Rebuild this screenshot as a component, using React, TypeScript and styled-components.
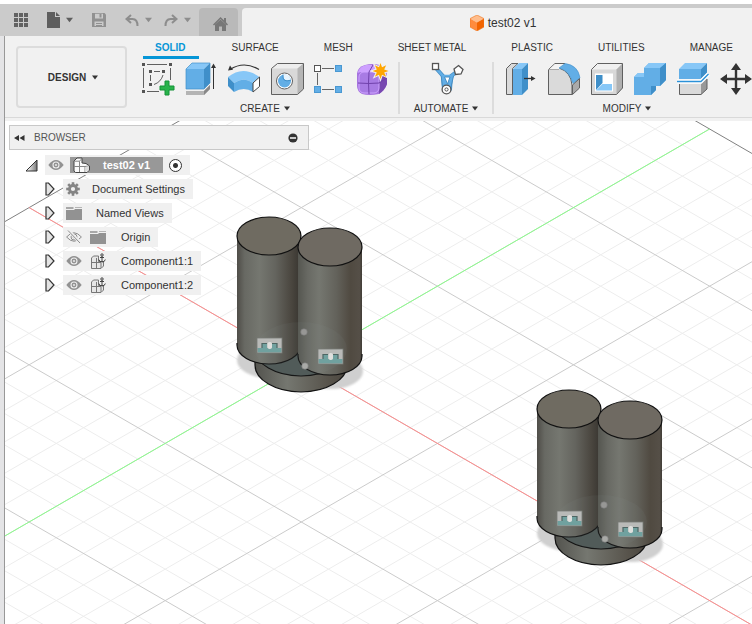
import React from "react";
import styled, { createGlobalStyle, css } from "styled-components";

const GlobalStyle = createGlobalStyle`
  * { box-sizing: border-box; }
  html, body { margin: 0; padding: 0; background: #fff; }
  body { font-family: "Liberation Sans", Arial, sans-serif; color: #333; }
  button { font: inherit; color: inherit; background: none; border: 0; padding: 0; margin: 0; cursor: pointer; }
  ul { list-style: none; margin: 0; padding: 0; }
  svg { display: block; flex: none; }
`;

/* ---------- frame ---------- */

const Shell = styled.div`
  display: flex;
  flex-direction: column;
  min-height: 100vh;
  padding-top: 4px;
  overflow: hidden;
`;

const TitleBar = styled.header`
  display: flex;
  align-items: stretch;
  height: 32px;
  background: #cbcbcb;
`;

const QuickAccess = styled.div`
  display: flex;
  align-items: center;
  width: 199px;
  padding-left: 13px;
`;

const QuickButton = styled.button<{ $gap?: number }>`
  display: flex;
  align-items: center;
  gap: 6px;
  margin-right: ${(p) => p.$gap ?? 0}px;
`;

const HomeTab = styled.button`
  display: flex;
  align-items: center;
  justify-content: center;
  width: 39px;
  margin: 4px 4px 0 0;
  padding: 3px 0 0 3px;
  border-radius: 4px 4px 0 0;
  background: #b9b9b9;
`;

const DocumentTab = styled.h1`
  display: flex;
  flex: 1;
  align-items: center;
  justify-content: center;
  gap: 4px;
  margin: 4px 0 0;
  padding: 2px 0 0 12px;
  border-radius: 4px 0 0 0;
  background: #f1f1f1;
  font-size: 12px;
  font-weight: 400;
  line-height: 26px;
`;

const Workspace = styled.div`
  display: flex;
  flex: 1;
  flex-direction: column;
  min-width: 0;
  border-left: 4px solid #e4e4e6;
`;

/* ---------- ribbon ---------- */

const Ribbon = styled.section`
  border-left: 1px solid #989898;
  background: #f1f1f1;
  padding-bottom: 3px;
`;

const RibbonBody = styled.div`
  display: flex;
  overflow: hidden;
  border-bottom: 1px solid #d9d9d9;
`;

const WorkspaceButton = styled.button`
  display: flex;
  flex: none;
  align-items: center;
  justify-content: center;
  gap: 6px;
  width: 111px;
  height: 62px;
  margin: 10px 9px 9px 11px;
  padding-left: 3px;
  border: 2px solid #dcdcdc;
  border-radius: 4px;
  font-size: 10px;
  font-weight: 700;
`;

const Tools = styled.div`
  flex: 1;
  min-width: 0;
`;

const TabList = styled.div`
  display: flex;
  gap: 21px;
  padding-left: 7px;
`;

const Tab = styled.button<{ $active?: boolean }>`
  flex: none;
  height: 23px;
  padding: 4px 12px 0;
  border-bottom: 3px solid transparent;
  font-size: 10px;
  line-height: 16px;
  white-space: nowrap;
  ${(p) =>
    p.$active &&
    css`
      padding-right: 13px;
      border-bottom-color: #0696d7;
      color: #0696d7;
      font-weight: 700;
    `}
`;

const Groups = styled.div`
  display: flex;
`;

const Group = styled.div<{ $wide?: boolean }>`
  display: flex;
  flex: none;
  flex-direction: column;
  align-items: center;
  width: ${(p) => (p.$wide ? "258px" : "84px")};
`;

const IconRow = styled.div`
  display: flex;
`;

const GroupLabel = styled.button`
  display: flex;
  align-items: center;
  gap: 4px;
  height: 19px;
  padding-top: 1px;
  font-size: 10px;
  white-space: nowrap;
`;

const Divider = styled.div`
  flex: none;
  width: 2px;
  margin: 3px 4px;
  background: #dcdcdc;
`;

/* ---------- canvas ---------- */

const Canvas = styled.main`
  position: relative;
  flex: 1;
  min-height: 503px;
  overflow: hidden;
  border-left: 1px solid #989898;
  background: #fff;
`;

const Scene = styled.svg`
  position: absolute;
  inset: 0;
  width: 100%;
  height: 100%;
`;

const BrowserPanel = styled.aside`
  position: relative;
  width: 300px;
  margin: 4px;
`;

const PanelHeader = styled.div`
  display: flex;
  align-items: center;
  gap: 9px;
  height: 25px;
  padding: 0 10px 0 4px;
  border: 1px solid #c8c8c8;
  background: #f0f0f0;
`;

const PanelTitle = styled.h2`
  flex: 1;
  margin: 0;
  color: #555;
  font-size: 10px;
  font-weight: 400;
`;

const Tree = styled.ul`
  padding-top: 3px;
`;

const TreeRow = styled.li<{ $root?: boolean }>`
  display: flex;
  align-items: center;
  gap: ${(p) => (p.$root ? 7 : 8)}px;
  height: 24px;
  padding-left: ${(p) => (p.$root ? 16 : 36)}px;
`;

const RowBody = styled.div<{ $root?: boolean }>`
  display: flex;
  align-items: center;
  gap: ${(p) => (p.$root ? 6 : 8)}px;
  height: 20px;
  padding: 0 8px 0 3px;
  background: #f0f0f0;
  font-size: 11px;
`;

const RowLabel = styled.span<{ $gap: number }>`
  margin-left: ${(p) => p.$gap}px;
  white-space: nowrap;
`;

const ActiveName = styled.span`
  display: flex;
  align-items: center;
  gap: 12px;
  height: 16px;
  padding: 0 13px 0 3px;
  background: #989898;
  color: #fff;
  font-weight: 700;
  white-space: nowrap;
`;

const ActiveRadio = styled.input`
  width: 13px;
  height: 13px;
  margin: 0;
  appearance: none;
  border: 1px solid #333;
  border-radius: 50%;
  background: radial-gradient(circle, #333 2px, #fff 3px);
`;

/* ---------- small glyphs ---------- */

const Caret = ({ color = "#333", size = 6 }: { color?: string; size?: number }) => (
  <svg width={size} height={size - 1} viewBox="0 0 6 5" aria-hidden>
    <path d="M0 0.5H6L3 4.5Z" fill={color} />
  </svg>
);

const GridIcon = () => (
  <svg width="16" height="16" viewBox="0 0 16 16" fill="#626262">
    {[0, 5, 10].map((y) =>
      [0, 5, 10].map((x) => <rect key={`${x}-${y}`} x={x + 1} y={y + 1} width="4" height="4" />)
    )}
  </svg>
);

const FileIcon = () => (
  <svg width="13" height="16" viewBox="0 0 13 16" fill="#5e5e5e">
    <path d="M0 0H8V5H13V16H0Z" />
    <path d="M9 0L13 4H9Z" />
  </svg>
);

const SaveIcon = () => (
  <svg width="14" height="14" viewBox="0 0 14 14">
    <path d="M0 0H12.5L14 1.5V14H0Z" fill="#919191" />
    <path d="M3 0.8H11V5.5H3ZM2.5 8.5H11.5V13H2.5Z" fill="#cbcbcb" />
    <path d="M7.5 1H9.5V4.5H7.5ZM4 10H10V11H4ZM4 12H10V13H4Z" fill="#919191" />
  </svg>
);

const UndoIcon = ({ flip }: { flip?: boolean }) => (
  <svg width="14" height="13" viewBox="0 0 14 13" fill="none" stroke="#8d8d8d" strokeWidth="2">
    <g transform={flip ? "translate(14 0) scale(-1 1)" : undefined}>
      <path d="M6 1L1.5 5L6 9" />
      <path d="M2 5H7.5Q12.5 5 12.5 12" />
    </g>
  </svg>
);

const HomeIcon = () => (
  <svg width="15" height="14" viewBox="0 0 15 14" fill="#777">
    <path d="M7.5 0L11 3.3V1H13V5.2L15 7.4L14 8.4L7.5 2L1 8.4L0 7.4Z" />
    <path d="M2 7.6L7.5 2.4L13 7.6V14H9V9.5H6V14H2Z" />
  </svg>
);

const CubeIcon = () => (
  <svg width="14" height="16" viewBox="0 0 14 16">
    <path d="M7 0L14 3.6L7 7.5L0 3.6Z" fill="#ffbd8c" />
    <path d="M0 3.6L7 7.5V16L0 12Z" fill="#ff8b3d" />
    <path d="M14 3.6L7 7.5V16L14 12Z" fill="#f26400" />
    <path d="M7 0L14 3.6V12L7 16L0 12V3.6Z" fill="none" stroke="#ef761f" strokeWidth=".6" />
  </svg>
);

const EyeIcon = ({ hidden }: { hidden?: boolean }) => (
  <svg width="16" height="14" viewBox="0 0 16 14">
    {hidden ? (
      <g fill="none" stroke="#8e8e8e">
        <path d="M.6 7Q8-1.5 15.4 7Q8 15.5.6 7Z" />
        <circle cx="8" cy="7" r="3" />
        <circle cx="8" cy="7" r="1" fill="#8e8e8e" />
        <path d="M2.5.5L14.5 13" stroke="#f0f0f0" strokeWidth="3" />
        <path d="M2 .5L14 13" />
      </g>
    ) : (
      <>
        <path d="M.3 7Q8-3 15.7 7Q8 17 .3 7Z" fill="#929292" />
        <circle cx="8" cy="7" r="3" fill="#929292" stroke="#efefef" strokeWidth="1.1" />
        <circle cx="8" cy="7" r="1.1" fill="#e5e5e5" />
      </>
    )}
  </svg>
);

const GearIcon = () => (
  <svg width="14" height="14" viewBox="-7 -7 14 14">
    {[0, 45, 90, 135].map((a) => (
      <rect key={a} x="-1.3" y="-6.8" width="2.6" height="13.6" fill="#858585" transform={`rotate(${a})`} />
    ))}
    <circle r="3.5" fill="#f0f0f0" stroke="#858585" strokeWidth="2.8" />
  </svg>
);

const FolderIcon = () => (
  <svg width="16" height="14" viewBox="0 0 16 14">
    <path d="M0 4H8L9 3H16V14H0Z" fill="#929292" />
    <path d="M0 1H7.5V3H0Z" fill="#a8a8a8" />
    <path d="M9 1.5H16" stroke="#b5b5b5" />
  </svg>
);

const ComponentIcon = () => (
  <svg width="18" height="16" viewBox="0 0 18 16" stroke="#444" strokeLinejoin="round">
    <path d="M1 4L4 1H9V6L13 6.5L16.5 9V13L14 15.5H2.5L1 14Z" fill="#fafafa" />
    <path d="M1.3 4.2H6.5L9 1.5M6.5 4.2V9.5H12L16 9M6.5 9.5V15M12 9.5V15M1.2 9.5H6.5" stroke="#858585" fill="none" />
    <path d="M12.2 10L16 9.3V13L12.2 15Z" fill="#dcdcdc" stroke="none" />
  </svg>
);

const AnchoredIcon = () => (
  <svg width="16" height="17" viewBox="0 0 16 17" fill="none" strokeLinejoin="round">
    <path d="M1.5 5L3.5 3H8.5V8.5H13.5V13L11 15.5H1.5Z" fill="#e6e6e6" stroke="#777" />
    <path d="M1.5 9.5H11M6.5 5V15M11 10V15" stroke="#777" />
    <circle cx="12" cy="2" r="1.2" stroke="#444" />
    <path d="M12 3V9M10 4.5H14M8.8 6.5Q9.5 9 12 9Q14.8 9 15.3 6.5" stroke="#444" />
  </svg>
);

const CollapsedIcon = () => (
  <svg width="10" height="14" viewBox="0 0 10 14">
    <path d="M1 1H3.5L9 7L3.5 13H1Z" fill="#e4e4e4" stroke="#333" strokeWidth="1.2" />
  </svg>
);

const ExpandedIcon = () => (
  <svg width="13" height="13" viewBox="0 0 13 13">
    <defs>
      <linearGradient id="expander">
        <stop offset="0.2" stopColor="#eee" />
        <stop offset="1" stopColor="#777" />
      </linearGradient>
    </defs>
    <path d="M1 12H12V1Z" fill="url(#expander)" stroke="#333" />
  </svg>
);

/* ---------- ribbon icons, drawn in 43 x 39 cells ---------- */

const FRONT = "#62aee6";
const TOP = "#87c7f7";
const SIDE = "#3f8fc9";
const EDGE = "#606060";

const SketchIcon = () => (
  <>
    <g fill="none" stroke={EDGE} strokeWidth="1">
      <path d="M11 6.5H31M34.5 10V22M7.5 10V30M11 33.5H23M18 13.5H24M14.5 17V23" />
      <path d="M27 17Q25 24 18 26.5" />
    </g>
    {[[7, 6], [34, 6], [7, 33], [14, 13], [27, 13], [14, 26]].map(([x, y]) => (
      <rect key={`${x}-${y}`} x={x - 1} y={y - 1} width="3" height="3" fill="#555" />
    ))}
    <path d="M29 23H33V28H38V32H33V37H29V32H24V28H29Z" fill="#28b34b" stroke="#159238" />
  </>
);

const ExtrudeIcon = () => (
  <>
    <path d="M7 33H25L31 27V31L25 37H7Z" fill="#b4b4b4" />
    <path d="M25 33L31 27V31L25 37Z" fill="#888" />
    <path d="M7 11H25V31H7Z" fill={FRONT} />
    <path d="M7 11L13 5H31L25 11Z" fill={TOP} />
    <path d="M25 11L31 5V25L25 31Z" fill={SIDE} />
    <path d="M7 11L13 5H31V25L25 31H7Z" fill="none" stroke={SIDE} strokeWidth=".7" />
    <path d="M34.5 31V8" stroke="#333" />
    <path d="M34.5 5.5L32 10H37Z" fill="#333" />
  </>
);

const RevolveIcon = () => (
  <>
    <path d="M8 11.5Q22 2.5 37 11.5" fill="none" stroke="#333" strokeWidth="1.2" />
    <path d="M6 12.5L8 7.5L11 11.8Z" fill="#333" />
    <path d="M6 19Q21 7 37.5 19L31 25Q22 18 12 25Z" fill={TOP} />
    <path d="M12 25Q22 18 31 25V34Q22 28 12 34Z" fill={FRONT} />
    <path d="M6 19L12 25V34L6 28Z" fill={SIDE} />
    <path d="M31 25L37.5 19V28.5L31 34Z" fill="#fff" stroke="#444" />
  </>
);

const HoleIcon = () => (
  <>
    <path d="M6.5 10.5L12.5 5.5H38.5V31L32.5 36.5H6.5Z" fill="#d9d9d9" />
    <path d="M6.5 10.5L12.5 5.5H38.5L32.5 10.5Z" fill="#eee" />
    <path d="M32.5 10.5L38.5 5.5V31L32.5 36.5Z" fill="#b5b5b5" />
    <path d="M6.5 10.5L12.5 5.5H38.5V31L32.5 36.5H6.5Z" fill="none" stroke={EDGE} />
    <circle cx="19.5" cy="23" r="8" fill="#fff" stroke={EDGE} />
    <circle cx="19.5" cy="23" r="6.5" fill={FRONT} />
    <path d="M18 16.6Q18 24.5 25.8 22Q24 15 18 16.6Z" fill="#e6f3fd" />
    <path d="M18 16.6Q17 25 25.8 22.2" fill="none" stroke={SIDE} />
  </>
);

const PatternIcon = () => (
  <>
    <path d="M14 10.5H26M9.5 15V27M14 31.5H26" stroke="#666" />
    <rect x="6.5" y="7.5" width="6" height="6" fill="#fff" stroke="#555" />
    {[[27.5, 7.5], [6.5, 28.5], [27.5, 28.5]].map(([x, y]) => (
      <rect key={`${x}-${y}`} x={x} y={y} width="6" height="6" fill={FRONT} stroke="#4a98d2" />
    ))}
  </>
);

const STAR = Array.from({ length: 16 }, (_, i) => {
  const r = i % 2 ? 4 : 8;
  const a = (i * Math.PI) / 8;
  return `${29.5 + r * Math.sin(a)},${13 - r * Math.cos(a)}`;
}).join(" ");

const FormIcon = () => (
  <>
    <path d="M6 15Q7 9 14 7Q21 5 29 7Q36 9 36 19V26Q34 32 28 36Q18 38 11 36Q6 33 6 28Z" fill="#a674df" />
    <path d="M6.5 15Q9 8 15 7H26L30 12Q28 14 24 14H12Q8 14 6.5 15Z" fill="#cda0ff" />
    <path d="M28 15L36 17V26Q34 32 28 36Z" fill="#7849b0" />
    <rect x="8" y="14" width="20" height="21" rx="5" fill="#a87be4" stroke="#cda4ff" />
    <path d="M7 25Q18 26 28 25L36 20M18 14Q17 25 18 36M18 14L22 7" fill="none" stroke="#7041ab" />
    <polygon points={STAR} fill="#ffa600" stroke="#f1f1f1" strokeWidth="2" />
    <polygon points={STAR} fill="#ffa600" />
  </>
);

const AutomateIcon = () => (
  <>
    <path d="M10 9L18 18L19 31L25 31L26 18L34 12" fill="none" stroke="#478fc5" strokeWidth="4" strokeLinejoin="round" />
    <path d="M16 16Q22 20 29 16L25 33H18Z" fill={FRONT} stroke="#478fc5" />
    <path d="M10 9L18 18L26 18L34 12" fill="none" stroke={FRONT} strokeWidth="2.4" />
    <path d="M19.5 19H25L22.5 26Z" fill="#fff" stroke="#478fc5" />
    <rect x="7.5" y="5.5" width="6" height="6" fill="#fff" stroke="#555" strokeWidth="1.3" />
    <path d="M33.5 7.5L38 11.5L36 16L30.5 16.5L29 11Z" fill="#fff" stroke="#555" strokeWidth="1.3" />
    <circle cx="21.5" cy="31.5" r="4.4" fill="#fff" stroke="#555" strokeWidth="1.3" />
    <circle cx="21.5" cy="31.5" r="1.6" fill="none" stroke="#555" />
  </>
);

const PressPullIcon = () => (
  <>
    <path d="M8.5 10.5L13.5 5.5H20L14.5 10.5V36.5H8.5Z" fill="#dadada" stroke={EDGE} />
    <path d="M15 11H24V37H15Z" fill={FRONT} />
    <path d="M15 11L21 5H30L24 11Z" fill={TOP} />
    <path d="M24 11L30 5V31L24 37Z" fill={SIDE} />
    <path d="M26 20.5H35" stroke="#333" strokeWidth="1.3" />
    <path d="M37.5 20.5L33 18V23Z" fill="#333" />
  </>
);

const FilletIcon = () => (
  <>
    <path d="M7.5 11.5L14 5.5H24L18 10Q30 14 31 27V36.5H7.5Z" fill="#dadada" stroke={EDGE} />
    <path d="M8 11.5L14 6H24L18 11Z" fill="#f4f4f4" />
    <path d="M7.5 11.5H18" stroke="#aaa" />
    <path d="M18 10L24 5.5Q37 7 39 20L32 25.5Q28 12 18 10Z" fill={FRONT} stroke={SIDE} strokeWidth=".6" />
    <path d="M31.5 27L38.5 20.5V30L31.5 36.5Z" fill="#aaa" stroke={EDGE} />
  </>
);

const ShellIcon = () => (
  <>
    <path d="M7.5 11.5L13.5 5.5H38.5V30L32.5 36.5H7.5Z" fill="#d8d8d8" />
    <path d="M7.5 11.5L13.5 5.5H38.5L32.5 11.5Z" fill="#f0f0f0" />
    <path d="M32.5 11.5L38.5 5.5V30L32.5 36.5Z" fill="#b0b0b0" />
    <path d="M7.5 11.5L13.5 5.5H38.5V30L32.5 36.5H7.5Z" fill="none" stroke={EDGE} />
    <rect x="11" y="15.5" width="18" height="18" fill="#fff" />
    <path d="M12 17H18.5V25L12 32Z" fill={SIDE} />
    <path d="M18.5 26H28V32.5H12Z" fill={TOP} />
  </>
);

const CombineIcon = () => (
  <>
    <path d="M7 19L11 15H17V10L22 5H39V22L33 28H29V32L24 37H7Z" fill={FRONT} />
    <path d="M7 19L11 15H17V19ZM17 10L22 5H39L33 10Z" fill={TOP} />
    <path d="M33 10L39 5V22L33 28ZM24 28H29V32L24 37Z" fill={SIDE} />
  </>
);

const SplitIcon = () => (
  <>
    <path d="M9.5 26H31L37 20V31L31 36.5H9.5Z" fill="#dadada" />
    <path d="M31 26L37 20V31L31 36.5Z" fill="#999" />
    <path d="M9.5 26V36.5H31L37 31V21" fill="none" stroke={EDGE} />
    <path d="M9 11H31V21H9Z" fill={FRONT} />
    <path d="M9 11L15 5H37L31 11Z" fill={TOP} />
    <path d="M31 11L37 5V15L31 21Z" fill={SIDE} />
    <path d="M7 23.5H31L38.5 16" fill="none" stroke="#fff" strokeWidth="4" />
    <path d="M7 23.5H31L38.5 16" fill="none" stroke="#2a91d8" strokeWidth="1.3" />
  </>
);

const MoveIcon = () => (
  <>
    <path d="M23 10V32M12 21H34" stroke="#333" strokeWidth="2.4" />
    <path d="M23 5L28 12H18ZM23 37L28 30H18ZM7 21L14 16V26ZM39 21L32 16V26Z" fill="#333" />
  </>
);

type Tool = { name: string; Icon: React.FC };

const ToolButton = ({ name, Icon }: Tool) => (
  <button aria-label={name}>
    <svg width="43" height="39" viewBox="0 1 43 39" aria-hidden>
      <Icon />
    </svg>
  </button>
);

const GROUPS: { label: string; wide: boolean; tools: Tool[] }[] = [
  {
    label: "CREATE",
    wide: true,
    tools: [
      { name: "Create Sketch", Icon: SketchIcon },
      { name: "Extrude", Icon: ExtrudeIcon },
      { name: "Revolve", Icon: RevolveIcon },
      { name: "Hole", Icon: HoleIcon },
      { name: "Rectangular Pattern", Icon: PatternIcon },
      { name: "Create Form", Icon: FormIcon },
    ],
  },
  { label: "AUTOMATE", wide: false, tools: [{ name: "Automated Modeling", Icon: AutomateIcon }] },
  {
    label: "MODIFY",
    wide: true,
    tools: [
      { name: "Press Pull", Icon: PressPullIcon },
      { name: "Fillet", Icon: FilletIcon },
      { name: "Shell", Icon: ShellIcon },
      { name: "Combine", Icon: CombineIcon },
      { name: "Split Body", Icon: SplitIcon },
      { name: "Move/Copy", Icon: MoveIcon },
    ],
  },
];

const TABS = ["SOLID", "SURFACE", "MESH", "SHEET METAL", "PLASTIC", "UTILITIES", "MANAGE"];

/* ---------- 3D scene ---------- */

const CX = 296.3;
const CY = 243.8;
const STEP_X = 136.1;
const STEP_Y = 78.6;

/* u runs along the red axis, v along the green one */
const project = (u: number, v: number) => [CX + (u + v) * STEP_X, CY + (u - v) * STEP_Y];

const segment = (u1: number, v1: number, u2: number, v2: number) => {
  const [x1, y1] = project(u1, v1);
  const [x2, y2] = project(u2, v2);
  return `M${x1} ${y1}L${x2} ${y2}`;
};

const U_MIN = -2;
const V_MAX = 3;
const FAR = 8;

const gridPath = (major: boolean) => {
  const parts: string[] = [];
  for (let i = U_MIN * 5 + 1; i < FAR * 5; i++)
    if ((i % 5 === 0) === major) parts.push(segment(i / 5, -FAR, i / 5, V_MAX));
  for (let i = -FAR * 5; i < V_MAX * 5; i++)
    if ((i % 5 === 0) === major) parts.push(segment(U_MIN, i / 5, FAR, i / 5));
  return parts.join("");
};

const Joint = ({ x, y }: { x: number; y: number }) => (
  <g transform={`translate(${x} ${y})`}>
    <rect width="25" height="15" fill="#b9bab8" />
    <path d="M.5 10H5V5.5H10V10H15V5.5H20V10H24.5V14.5H.5Z" fill="#70a19f" />
    <path d="M5 10V5.5H10M20 10V5.5H15" fill="none" stroke="#4e6664" />
    <rect width="25" height="15" fill="none" stroke="#777a76" strokeWidth=".8" />
    <rect x="10.5" y="4" width="4.5" height="7" rx="2" fill="#dedfdd" />
  </g>
);

const Assembly = ({ x, y }: { x: number; y: number }) => (
  <g transform={`translate(${x} ${y})`} strokeWidth="1.2">
    <g fill="#cfcfcf" filter="url(#soft)">
      <ellipse cx="-32" cy="-5" rx="32" ry="18" />
      <ellipse cx="30" cy="6" rx="32" ry="18" />
    </g>
    <path d="M-46-16V0A46 27 0 0 0 46 0V-16Z" fill="url(#base)" stroke="#111" />
    <ellipse cy="-16" rx="46" ry="27" fill="#4c5654" stroke="#111" />
    <path d="M-64-130V-20A32 19 0 0 0 0-20V-130Z" fill="url(#left)" />
    <path d="M-64-22V-20A32 19 0 0 0 0-20" fill="none" stroke="#111" />
    <ellipse cx="-32" cy="-129" rx="32" ry="19" fill="#6f6b61" stroke="#111" />
    <path d="M-3-119V-9A32 19 0 0 0 61-9V-119Z" fill="url(#right)" />
    <path d="M-3-11V-9A32 19 0 0 0 61-9V-11" fill="none" stroke="#111" />
    <ellipse cx="29" cy="-118" rx="32" ry="19" fill="#6f6a62" stroke="#111" />
    <ellipse cy="-16" rx="46" ry="27" fill="#8a9a96" opacity=".08" />
    <Joint x={-44} y={-27} />
    <Joint x={17} y={-16} />
    <circle cx="3" cy="-33" r="3.3" fill="#979795" stroke="#777" strokeWidth=".6" />
    <circle cx="4" cy="1" r="3.3" fill="#a9aaa7" stroke="#777" strokeWidth=".6" />
  </g>
);

const Viewport = () => (
  <Scene role="img" aria-label="3D model view">
    <defs>
      <filter id="soft">
        <feGaussianBlur stdDeviation="1" />
      </filter>
      <linearGradient id="left">
        <stop offset="0" stopColor="#4f4d48" />
        <stop offset=".12" stopColor="#686963" />
        <stop offset=".35" stopColor="#757770" />
        <stop offset=".6" stopColor="#64645e" />
        <stop offset=".85" stopColor="#4a463f" />
        <stop offset="1" stopColor="#37342f" />
      </linearGradient>
      <linearGradient id="right">
        <stop offset="0" stopColor="#555650" />
        <stop offset=".15" stopColor="#686963" />
        <stop offset=".33" stopColor="#757770" />
        <stop offset=".6" stopColor="#63625b" />
        <stop offset=".82" stopColor="#504a41" />
        <stop offset=".96" stopColor="#554f47" />
        <stop offset="1" stopColor="#403c36" />
      </linearGradient>
      <linearGradient id="base">
        <stop offset="0" stopColor="#53534e" />
        <stop offset=".35" stopColor="#757770" />
        <stop offset=".8" stopColor="#57534b" />
        <stop offset="1" stopColor="#4a453e" />
      </linearGradient>
    </defs>
    <path d={gridPath(false)} stroke="#ededed" />
    <path d={gridPath(true)} stroke="#cbcbcb" />
    <path d={segment(U_MIN, -FAR, U_MIN, V_MAX) + segment(U_MIN, V_MAX, FAR, V_MAX)} stroke="#808080" />
    <path d={segment(U_MIN, 0, FAR, 0)} stroke="#ff8c8c" />
    <path d={segment(0, -FAR, 0, V_MAX)} stroke="#8cff8c" />
    <Assembly x={296} y={244} />
    <Assembly x={596} y={417} />
  </Scene>
);

/* ---------- browser tree ---------- */

type Item = { label: string; gap: number; eye?: "on" | "off"; Icon: React.FC };

const ITEMS: Item[] = [
  { label: "Document Settings", gap: 4, Icon: GearIcon },
  { label: "Named Views", gap: 6, Icon: FolderIcon },
  { label: "Origin", gap: 7, eye: "off", Icon: FolderIcon },
  { label: "Component1:1", gap: 7, eye: "on", Icon: AnchoredIcon },
  { label: "Component1:2", gap: 7, eye: "on", Icon: AnchoredIcon },
];

const Browser = () => (
  <BrowserPanel>
    <PanelHeader>
      <button aria-label="Collapse browser">
        <svg width="11" height="8" viewBox="0 0 11 8">
          <path d="M5 1V7L0 4ZM10.5 1V7L5.5 4Z" fill="#333" />
        </svg>
      </button>
      <PanelTitle>BROWSER</PanelTitle>
      <button aria-label="Hide browser">
        <svg width="10" height="10" viewBox="0 0 10 10">
          <circle cx="5" cy="5" r="4.6" fill="#333" />
          <path d="M2 5H8" stroke="#f0f0f0" strokeWidth="1.6" />
        </svg>
      </button>
    </PanelHeader>
    <Tree>
      <TreeRow $root>
        <button aria-label="Collapse test02 v1"><ExpandedIcon /></button>
        <RowBody $root>
          <button aria-label="Toggle visibility"><EyeIcon /></button>
          <ActiveName><ComponentIcon />test02 v1</ActiveName>
          <ActiveRadio type="radio" name="active" defaultChecked aria-label="Activate test02 v1" />
        </RowBody>
      </TreeRow>
      {ITEMS.map(({ label, gap, eye, Icon }) => (
        <TreeRow key={label}>
          <button aria-label={`Expand ${label}`}><CollapsedIcon /></button>
          <RowBody>
            {eye && (
              <button aria-label={`Toggle ${label}`}><EyeIcon hidden={eye === "off"} /></button>
            )}
            <Icon />
            <RowLabel $gap={gap}>{label}</RowLabel>
          </RowBody>
        </TreeRow>
      ))}
    </Tree>
  </BrowserPanel>
);

export default function App() {
  return (
    <Shell>
      <GlobalStyle />
      <TitleBar>
        <QuickAccess>
          <QuickButton $gap={18} aria-label="Data panel"><GridIcon /></QuickButton>
          <QuickButton $gap={19} aria-label="File"><FileIcon /><Caret color="#5e5e5e" size={7} /></QuickButton>
          <QuickButton $gap={19} aria-label="Save"><SaveIcon /></QuickButton>
          <QuickButton $gap={12} aria-label="Undo"><UndoIcon /><Caret color="#8d8d8d" size={7} /></QuickButton>
          <QuickButton aria-label="Redo"><UndoIcon flip /><Caret color="#8d8d8d" size={7} /></QuickButton>
        </QuickAccess>
        <HomeTab aria-label="Home"><HomeIcon /></HomeTab>
        <DocumentTab><CubeIcon />test02 v1</DocumentTab>
      </TitleBar>
      <Workspace>
        <Ribbon>
          <RibbonBody>
            <WorkspaceButton>DESIGN <Caret /></WorkspaceButton>
            <Tools>
              <TabList role="tablist">
                {TABS.map((t, i) => (
                  <Tab key={t} role="tab" aria-selected={i === 0} $active={i === 0}>{t}</Tab>
                ))}
              </TabList>
              <Groups>
                {GROUPS.map((g, i) => (
                  <React.Fragment key={g.label}>
                    {i > 0 && <Divider />}
                    <Group $wide={g.wide}>
                      <IconRow>
                        {g.tools.map((t) => <ToolButton key={t.name} {...t} />)}
                      </IconRow>
                      <GroupLabel>{g.label} <Caret /></GroupLabel>
                    </Group>
                  </React.Fragment>
                ))}
              </Groups>
            </Tools>
          </RibbonBody>
        </Ribbon>
        <Canvas>
          <Viewport />
          <Browser />
        </Canvas>
      </Workspace>
    </Shell>
  );
}
